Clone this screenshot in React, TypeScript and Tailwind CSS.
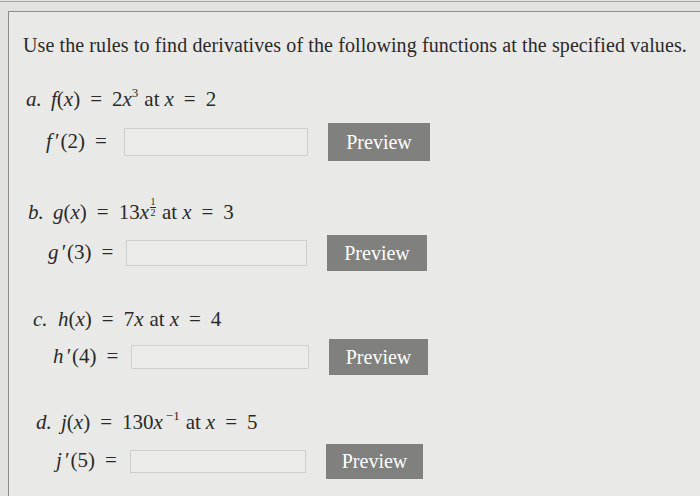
import React from 'react';

const serif = { fontFamily: '"Liberation Serif", "Times New Roman", serif' };

function V({ children }: { children: React.ReactNode }) {
  return <span className="italic">{children}</span>;
}

function Eq() {
  return <span className="mx-[10px]">=</span>;
}

interface ItemProps {
  letter: string;
  expr: React.ReactNode;
  fn: string;
  at: string;
  box: string;
  top: string;
  gap: string;
  lab: string;
  field: string;
  btn: string;
}

function Item({ letter, expr, fn, at, box, top, gap, lab, field, btn }: ItemProps) {
  return (
    <div className={`flex flex-col ${box} ${top}`}>
      <div className="flex items-center h-[24px] text-[21px] text-[#2a2a2a]">
        <span className="italic w-[25px]">{letter}.</span>
        {expr}
      </div>
      <div className={`flex items-center h-[38px] pl-[20px] ${gap}`}>
        <div className={`flex items-center text-[21px] text-[#2a2a2a] ${lab}`}>
          <V>{fn}</V>
          <span className="italic ml-[2px] mr-[2px]">′</span>
          <span>({at})</span>
          <Eq />
        </div>
        <div className={`border border-[#cfcfcc] bg-[#ebebe9] ${field}`} />
        <button
          type="button"
          className={`ml-[20px] bg-[#80807e] text-white text-[20px] leading-none ${btn}`}
          style={serif}
        >
          Preview
        </button>
      </div>
    </div>
  );
}

export default function App() {
  return (
    <div className="w-[700px] h-[496px] overflow-hidden bg-[#e2e2e0] pt-[1px]" style={serif}>
      <div className="border-t border-[#a6a6a4] pt-[9px] pl-[8px] h-full">
        <div className="border-t border-l border-[#8c8c8a] bg-[#e9e9e7] h-full pt-[21px] pl-[14px]">
          <p className="text-[20px] leading-[24px] text-[#2a2a2a] tracking-[0.1px]">
            Use the rules to find derivatives of the following functions at the specified values.
          </p>

          <Item
            letter="a"
            fn="f"
            at="2"
            box="pl-[3px]"
            top="mt-[31px]"
            gap="mt-[11px]"
            lab="w-[78px]"
            field="w-[184px] h-[28px]"
            btn="w-[102px] h-[38px]"
            expr={
              <span className="flex items-center">
                <V>f</V>(<V>x</V>)<Eq />2<V>x</V>
                <sup className="text-[13px] -mt-[2px]">3</sup>
                <span className="ml-[6px]">at</span>
                <span className="ml-[5px]"><V>x</V></span>
                <Eq />2
              </span>
            }
          />

          <Item
            letter="b"
            fn="g"
            at="3"
            box="pl-[5px]"
            top="mt-[40px]"
            gap="mt-[9px]"
            lab="w-[78px]"
            field="w-[181px] h-[26px]"
            btn="w-[100px] h-[36px]"
            expr={
              <span className="flex items-center">
                <V>g</V>(<V>x</V>)<Eq />13<V>x</V>
                <span className="flex flex-col items-center text-[10px] leading-[10px] -mt-[12px] ml-[1px]">
                  <span>1</span>
                  <span className="w-[6px] border-t border-[#2a2a2a]" />
                  <span>2</span>
                </span>
                <span className="ml-[6px]">at</span>
                <span className="ml-[5px]"><V>x</V></span>
                <Eq />3
              </span>
            }
          />

          <Item
            letter="c"
            fn="h"
            at="4"
            box="pl-[10px]"
            top="mt-[36px]"
            gap="mt-[6px]"
            lab="w-[78px]"
            field="w-[178px] h-[24px]"
            btn="w-[99px] h-[36px]"
            expr={
              <span className="flex items-center">
                <V>h</V>(<V>x</V>)<Eq />7<V>x</V>
                <span className="ml-[6px]">at</span>
                <span className="ml-[5px]"><V>x</V></span>
                <Eq />4
              </span>
            }
          />

          <Item
            letter="d"
            fn="j"
            at="5"
            box="pl-[13px]"
            top="mt-[35px]"
            gap="mt-[7px]"
            lab="w-[74px]"
            field="w-[176px] h-[23px]"
            btn="w-[97px] h-[35px]"
            expr={
              <span className="flex items-center">
                <V>j</V>(<V>x</V>)<Eq />130<V>x</V>
                <sup className="text-[13px] -mt-[2px] ml-[3px]">−1</sup>
                <span className="ml-[6px]">at</span>
                <span className="ml-[5px]"><V>x</V></span>
                <Eq />5
              </span>
            }
          />
        </div>
      </div>
    </div>
  );
}
